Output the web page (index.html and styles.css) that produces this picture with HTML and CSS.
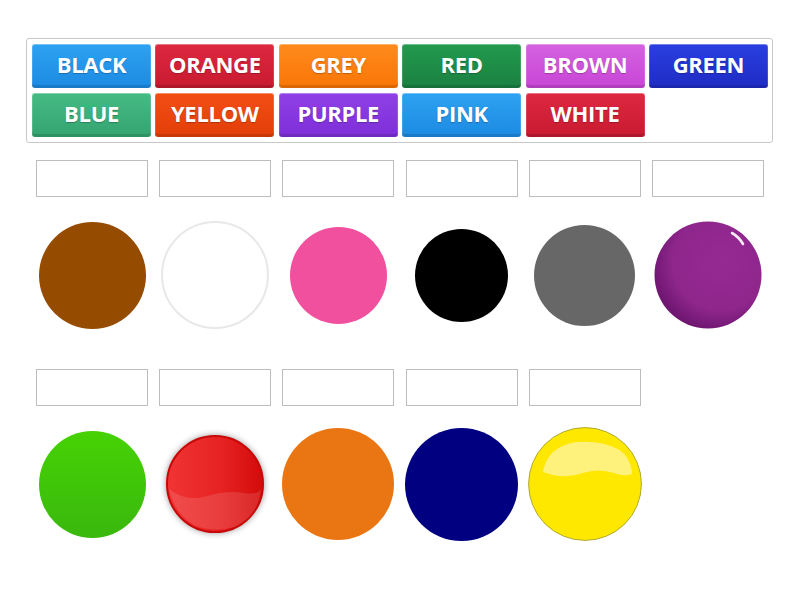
FILE: index.html
```html
<!DOCTYPE html>
<html lang="en">
<head>
    <meta charset="UTF-8">
    <meta name="viewport" content="width=device-width, initial-scale=1.0">
    <title>Colours - Match up</title>
    <link rel="stylesheet" href="styles.css">
</head>
<body>
    <div class="page">
        <!-- word bank -->
        <div class="bank">
            <div class="tile t-blue">BLACK</div>
            <div class="tile t-crimson">ORANGE</div>
            <div class="tile t-orange">GREY</div>
            <div class="tile t-green">RED</div>
            <div class="tile t-orchid">BROWN</div>
            <div class="tile t-indigo">GREEN</div>
            <div class="tile t-mint">BLUE</div>
            <div class="tile t-tomato">YELLOW</div>
            <div class="tile t-violet">PURPLE</div>
            <div class="tile t-blue">PINK</div>
            <div class="tile t-crimson">WHITE</div>
        </div>

        <!-- drop targets with pictures -->
        <div class="board">
            <div class="cell">
                <div class="slot"></div>
                <div class="pic"><div class="ball brown"></div></div>
            </div>
            <div class="cell">
                <div class="slot"></div>
                <div class="pic"><div class="ball white"></div></div>
            </div>
            <div class="cell">
                <div class="slot"></div>
                <div class="pic"><div class="ball pink"></div></div>
            </div>
            <div class="cell">
                <div class="slot"></div>
                <div class="pic"><div class="ball black"></div></div>
            </div>
            <div class="cell">
                <div class="slot"></div>
                <div class="pic"><div class="ball grey"></div></div>
            </div>
            <div class="cell">
                <div class="slot"></div>
                <div class="pic">
                    <svg class="glossy" width="108" height="108" viewBox="0 0 108 108">
                        <defs>
                            <radialGradient id="purpleFill" cx="62%" cy="38%" r="65%">
                                <stop offset="0" stop-color="#962a93"/>
                                <stop offset="0.7" stop-color="#8e268c"/>
                                <stop offset="1" stop-color="#6e1670"/>
                            </radialGradient>
                        </defs>
                        <circle cx="54" cy="54" r="53.5" fill="url(#purpleFill)"/>
                        <path d="M78 12 Q85 16 89 23" stroke="#fff" stroke-width="2.6" stroke-linecap="round" fill="none" opacity="0.9"/>
                    </svg>
                </div>
            </div>

            <div class="cell">
                <div class="slot"></div>
                <div class="pic"><div class="ball green"></div></div>
            </div>
            <div class="cell">
                <div class="slot"></div>
                <div class="pic">
                    <svg class="glossy red-shadow" width="102" height="102" viewBox="0 0 102 102">
                        <defs>
                            <linearGradient id="redFill" x1="0" y1="0" x2="1" y2="0">
                                <stop offset="0" stop-color="#f03434"/>
                                <stop offset="0.55" stop-color="#e72323"/>
                                <stop offset="1" stop-color="#d30a0a"/>
                            </linearGradient>
                        </defs>
                        <circle cx="51" cy="51" r="48" fill="url(#redFill)" stroke="#c80808" stroke-width="2"/>
                        <path d="M5 56 Q20 68 40 64 Q62 57 80 60 Q92 62 97 57 Q94 84 70 94 Q50 100 30 92 Q10 80 5 56 Z" fill="#ffffff" opacity="0.12"/>
                    </svg>
                </div>
            </div>
            <div class="cell">
                <div class="slot"></div>
                <div class="pic"><div class="ball orange"></div></div>
            </div>
            <div class="cell">
                <div class="slot"></div>
                <div class="pic"><div class="ball navy"></div></div>
            </div>
            <div class="cell">
                <div class="slot"></div>
                <div class="pic">
                    <svg class="glossy" width="114" height="114" viewBox="0 0 114 114">
                        <circle cx="57" cy="57" r="56.4" fill="#ffe800" stroke="#a6a22a" stroke-width="0.9"/>
                        <path d="M15 45 Q19 20 48 15 Q72 13 90 22 Q103 30 104 47 Q96 50 86 46 Q70 41 55 46 Q36 53 15 45 Z" fill="#fff27c"/>
                    </svg>
                </div>
            </div>
        </div>
    </div>
</body>
</html>
```

FILE: styles.css
```css
body {
    margin: 0;
    background-color: #ffffff;
    font-family: "Open Sans", Arial, sans-serif;
}

.page {
    width: 800px;
    height: 600px;
    padding-top: 38px;
    box-sizing: border-box;
}

/* word bank */
.bank {
    margin-left: 26px;
    width: 747px;
    box-sizing: border-box;
    padding: 5px;
    border: 1px solid #c8c8c8;
    border-radius: 3px;
    display: grid;
    grid-template-columns: repeat(6, 119px);
    grid-auto-rows: 44px;
    column-gap: 4.4px;
    row-gap: 5px;
}

.tile {
    display: flex;
    align-items: center;
    justify-content: center;
    padding-bottom: 4px;
    color: #ffffff;
    font-size: 22px;
    font-weight: 700;
    letter-spacing: -0.3px;
    border-radius: 3px;
    text-shadow: 0 1px 1px rgba(0, 0, 0, 0.25);
    box-shadow: inset 0 1px 0 rgba(255, 255, 255, 0.35), inset 0 -3px 0 rgba(0, 0, 0, 0.12), inset 1px 0 0 rgba(255, 255, 255, 0.15), inset -1px 0 0 rgba(255, 255, 255, 0.15);
}

.t-blue    { background: linear-gradient(#2ea2f2, #1c8ae2); }
.t-crimson { background: linear-gradient(#dd2840, #c81a30); }
.t-orange  { background: linear-gradient(#ff8a1c, #f87606); }
.t-green   { background: linear-gradient(#229a4e, #1b8042); }
.t-orchid  { background: linear-gradient(#d462e0, #c845d6); }
.t-indigo  { background: linear-gradient(#2a3ee0, #1f2cc4); }
.t-mint    { background: linear-gradient(#45bb84, #34a470); }
.t-tomato  { background: linear-gradient(#f24e14, #e33e08); }
.t-violet  { background: linear-gradient(#9040e6, #7d2ed8); }

/* drop targets */
.board {
    margin-left: 36px;
    margin-top: 17px;
    display: grid;
    grid-template-columns: repeat(6, 112px);
    column-gap: 11.2px;
    row-gap: 30px;
}

.slot {
    height: 37px;
    border: 1px solid #bdbdbd;
    box-sizing: border-box;
    background-color: #ffffff;
}

.pic {
    margin-top: 14px;
    height: 128px;
    display: flex;
    align-items: center;
    justify-content: center;
}

.ball {
    border-radius: 50%;
    flex: none;
}

.brown  { width: 107px; height: 107px; background-color: #954b00; }
.white  { width: 104px; height: 104px; border: 2px solid #e8e8e8; background-color: #ffffff; }
.pink   { width: 97px;  height: 97px;  background-color: #f0509e; }
.black  { width: 93px;  height: 93px;  background-color: #000000; }
.grey   { width: 101px; height: 101px; background-color: #676767; }
.green  { width: 107px; height: 107px; background: linear-gradient(#46d204, #3ab80e); }
.orange { width: 112px; height: 112px; background-color: #e97612; }
.navy   { width: 113px; height: 113px; background-color: #000080; }

.glossy {
    display: block;
    flex: none;
}

.red-shadow {
    filter: drop-shadow(0 0 3px rgba(0, 0, 0, 0.4));
}
```
